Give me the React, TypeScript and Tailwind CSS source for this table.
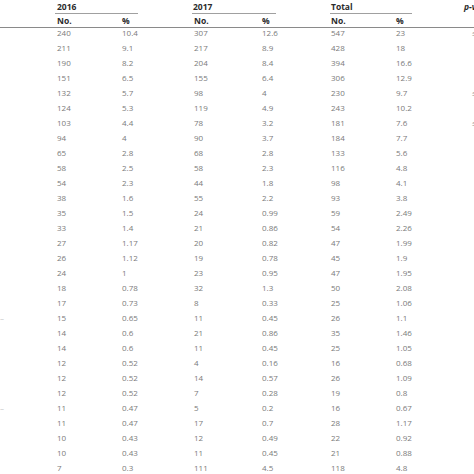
type Row = [string, string, string, string, string, string];

const rows: Row[] = [
  ["240", "10.4", "307", "12.6", "547", "23"],
  ["211", "9.1", "217", "8.9", "428", "18"],
  ["190", "8.2", "204", "8.4", "394", "16.6"],
  ["151", "6.5", "155", "6.4", "306", "12.9"],
  ["132", "5.7", "98", "4", "230", "9.7"],
  ["124", "5.3", "119", "4.9", "243", "10.2"],
  ["103", "4.4", "78", "3.2", "181", "7.6"],
  ["94", "4", "90", "3.7", "184", "7.7"],
  ["65", "2.8", "68", "2.8", "133", "5.6"],
  ["58", "2.5", "58", "2.3", "116", "4.8"],
  ["54", "2.3", "44", "1.8", "98", "4.1"],
  ["38", "1.6", "55", "2.2", "93", "3.8"],
  ["35", "1.5", "24", "0.99", "59", "2.49"],
  ["33", "1.4", "21", "0.86", "54", "2.26"],
  ["27", "1.17", "20", "0.82", "47", "1.99"],
  ["26", "1.12", "19", "0.78", "45", "1.9"],
  ["24", "1", "23", "0.95", "47", "1.95"],
  ["18", "0.78", "32", "1.3", "50", "2.08"],
  ["17", "0.73", "8", "0.33", "25", "1.06"],
  ["15", "0.65", "11", "0.45", "26", "1.1"],
  ["14", "0.6", "21", "0.86", "35", "1.46"],
  ["14", "0.6", "11", "0.45", "25", "1.05"],
  ["12", "0.52", "4", "0.16", "16", "0.68"],
  ["12", "0.52", "14", "0.57", "26", "1.09"],
  ["12", "0.52", "7", "0.28", "19", "0.8"],
  ["11", "0.47", "5", "0.2", "16", "0.67"],
  ["11", "0.47", "17", "0.7", "28", "1.17"],
  ["10", "0.43", "12", "0.49", "22", "0.92"],
  ["10", "0.43", "11", "0.45", "21", "0.88"],
  ["7", "0.3", "111", "4.5", "118", "4.8"],
];

const pRows = new Set([0, 4, 6]);
const markRows = new Set([19, 25]);

// cell widths, left to right: label, No., %, No., %, No., %
const widths = ["w-[57px]", "w-[65px]", "w-[72px]", "w-[68px]", "w-[69px]", "w-[65px]", "w-[72px]"];

export default function App() {
  return (
    <div
      className="h-[474px] w-[474px] overflow-hidden bg-white text-[8px]"
      style={{ fontFamily: '"Open Sans", "Noto Sans", sans-serif' }}
    >
      <div className="w-[520px]">
        {/* group headers */}
        <div className="flex h-[14px] text-[8.5px] font-bold text-[#2b2b2b]">
          <div className="w-[55px] shrink-0" />
          <div className="w-[83px] shrink-0 border-b border-[#a0a0a0] pl-[2px] leading-[13px]">2016</div>
          <div className="w-[54px] shrink-0" />
          <div className="w-[84px] shrink-0 border-b border-[#a0a0a0] pl-[1px] leading-[13px]">2017</div>
          <div className="w-[54px] shrink-0" />
          <div className="w-[82px] shrink-0 border-b border-[#a0a0a0] pl-[1px] leading-[13px]">Total</div>
          <div className="w-[52px] shrink-0" />
          <div className="shrink-0 italic leading-[13px]">p-value</div>
        </div>

        {/* sub headers */}
        <div className="flex h-[14px] border-b border-[#8a8a8a] text-[8.5px] font-bold leading-[13px] text-[#2b2b2b]">
          <div className={`${widths[0]} shrink-0`} />
          <div className={`${widths[1]} shrink-0`}>No.</div>
          <div className={`${widths[2]} shrink-0`}>%</div>
          <div className={`${widths[3]} shrink-0`}>No.</div>
          <div className={`${widths[4]} shrink-0`}>%</div>
          <div className={`${widths[5]} shrink-0`}>No.</div>
          <div className={`${widths[6]} shrink-0`}>%</div>
        </div>

        {/* body */}
        <div className="text-[#7a7a7a]">
          {rows.map((r, i) => (
            <div key={i} className="flex h-[15px] leading-[10px]">
              <div className={`${widths[0]} shrink-0 text-[#c4c4c4]`}>
                {markRows.has(i) ? "–" : ""}
              </div>
              {r.map((v, j) => (
                <div key={j} className={`${widths[j + 1]} shrink-0`}>
                  {v}
                </div>
              ))}
              <div className="shrink-0 pl-[4px] text-[#8a8a8a]">
                {pRows.has(i) ? "≤0.001" : ""}
              </div>
            </div>
          ))}
        </div>
      </div>
    </div>
  );
}
